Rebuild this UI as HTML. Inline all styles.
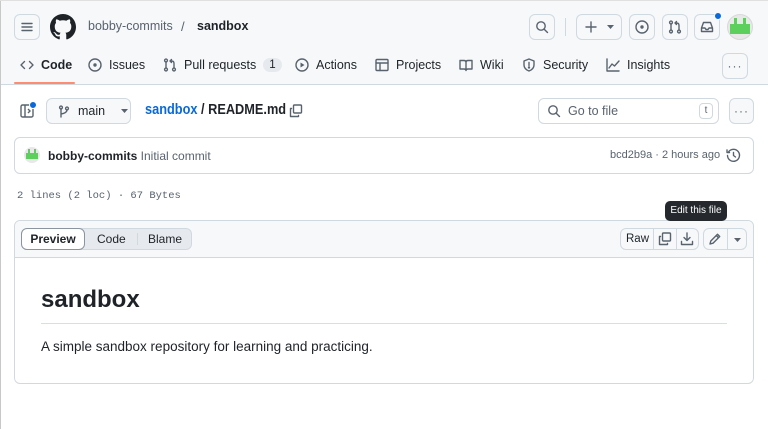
<!DOCTYPE html>
<html><head><meta charset="utf-8"><style>
*{box-sizing:border-box;margin:0;padding:0}
body{width:768px;height:429px;overflow:hidden;background:#fff;font-family:"Liberation Sans",sans-serif;color:#1f2328;position:relative}
.a{position:absolute}
.hdr{left:0;top:0;width:768px;height:85px;background:#f6f8fa;border-bottom:1px solid #d1d9e0}
.btn{position:absolute;border:1px solid #d1d9e0;border-radius:6px;background:#f6f8fa;display:flex;align-items:center;justify-content:center}
.hb{background:transparent}
svg{display:block}
.t{position:absolute;font-size:13px;white-space:nowrap}
.tab{position:absolute;top:58px;font-size:12.5px;color:#1f2328;display:flex;align-items:center;gap:7px;white-space:nowrap}
.ic{fill:none;stroke:#59636e;stroke-width:1.4;stroke-linecap:round;stroke-linejoin:round}
</style></head><body>
<div class="a hdr"></div>
<div class="a" style="left:0;top:0;width:1px;height:429px;background:#c8c8c8;z-index:5"></div>
<div class="a" style="left:0;top:0;width:768px;height:1px;background:#e0e0e0;z-index:5"></div>
<div class="btn hb" style="left:14px;top:14px;width:26px;height:26px"><svg width="14" height="14" class="ic"><path d="M2 3.5h10M2 7h10M2 10.5h10"/></svg></div>
<svg class="a" style="left:50px;top:14px" width="26" height="26" viewBox="0 0 16 16"><path fill="#1f2328" d="M8 0C3.58 0 0 3.58 0 8c0 3.54 2.290 6.53 5.47 7.59.4.07.55-.17.55-.38 0-.19-.01-.82-.01-1.490-2.01.37-2.530-.49-2.69-.94-.09-.23-.48-.94-.82-1.13-.28-.15-.68-.52-.01-.53.63-.01 1.08.58 1.23.82.72 1.21 1.870.87 2.33.66.07-.52.28-.87.51-1.07-1.78-.2-3.64-.89-3.64-3.95 0-.87.31-1.59.82-2.15-.08-.2-.36-1.02.08-2.12 0 0 .67-.21 2.2.82.64-.18 1.32-.27 2-.27.68 0 1.36.09 2 .27 1.53-1.04 2.2-.82 2.2-.82.44 1.1.16 1.92.08 2.12.51.56.82 1.27.82 2.15 0 3.07-1.87 3.75-3.65 3.95.29.25.54.73.54 1.48 0 1.07-.01 1.93-.01 2.2 0 .21.15.46.55.38A8.013 8.013 0 0016 8c0-4.42-3.58-8-8-8z"/></svg>
<div class="t" style="left:88px;top:19px;color:#59636e;font-size:12.5px">bobby-commits</div>
<div class="t" style="left:181px;top:19px;color:#59636e">/</div>
<div class="t" style="left:197px;top:19px;font-weight:bold;font-size:12.5px">sandbox</div>

<div class="btn hb" style="left:529px;top:14px;width:26px;height:26px"><svg width="14" height="14" class="ic"><circle cx="6" cy="6" r="4.2"/><path d="M9.2 9.2l3.3 3.3"/></svg></div>
<div class="a" style="left:565px;top:18px;width:1px;height:18px;background:#d1d9e0"></div>
<div class="btn hb" style="left:576px;top:14px;width:46px;height:26px;gap:10px"><svg width="12" height="12" class="ic"><path d="M6 1v10M1 6h10"/></svg><svg width="7" height="4"><path d="M0 0h7L3.5 4z" fill="#59636e"/></svg></div>
<div class="btn hb" style="left:629px;top:14px;width:26px;height:26px"><svg width="14" height="14" class="ic"><circle cx="7" cy="7" r="6"/><circle cx="7" cy="7" r="1" fill="#59636e"/></svg></div>
<div class="btn hb" style="left:662px;top:14px;width:26px;height:26px"><svg width="14" height="14" class="ic"><circle cx="3" cy="2.5" r="1.4"/><circle cx="3" cy="11.5" r="1.4"/><circle cx="11" cy="11.5" r="1.4"/><path d="M3 4v6M11 10V5.5Q11 3 8.5 3H7M8.5 1.5L7 3l1.5 1.5"/></svg></div>
<div class="btn hb" style="left:694px;top:14px;width:26px;height:26px"><svg width="14" height="14" class="ic"><path d="M1.5 8l2-5.5h7l2 5.5v3.5h-11zM1.5 8h3.5l1 1.5h2l1-1.5h3.5"/></svg></div>
<div class="a" style="left:714px;top:12px;width:8px;height:8px;border-radius:50%;background:#0969da;border:1px solid #f6f8fa"></div>
<div class="a" style="left:727px;top:14px;width:26px;height:26px;border-radius:50%;background:#e8e8e8;overflow:hidden;border:1px solid #d8d8d8"><div class="a" style="left:2px;top:9px;width:20px;height:10px;background:#5ccf5c"></div><div class="a" style="left:6px;top:3px;width:3px;height:7px;background:#5ccf5c"></div><div class="a" style="left:15px;top:3px;width:3px;height:7px;background:#5ccf5c"></div></div>

<div class="tab" style="left:20px;font-weight:bold"><svg width="14" height="14" class="ic"><path d="M4.5 3.5L1 7l3.5 3.5M9.5 3.5L13 7l-3.5 3.5"/></svg>Code</div>
<div class="a" style="left:14px;top:82px;width:61px;height:2px;background:#fd8c73;border-radius:1px"></div>
<div class="tab" style="left:88px"><svg width="14" height="14" class="ic"><circle cx="7" cy="7" r="6"/><circle cx="7" cy="7" r="1" fill="#59636e"/></svg>Issues</div>
<div class="tab" style="left:163px"><svg width="14" height="14" class="ic"><circle cx="3" cy="2.5" r="1.4"/><circle cx="3" cy="11.5" r="1.4"/><circle cx="11" cy="11.5" r="1.4"/><path d="M3 4v6M11 10V5.5Q11 3 8.5 3H7M8.5 1.5L7 3l1.5 1.5"/></svg>Pull requests<span style="background:#e6eaef;border-radius:9px;padding:1px 6px;font-size:11.5px">1</span></div>
<div class="tab" style="left:295px"><svg width="14" height="14" class="ic"><circle cx="7" cy="7" r="6"/><path d="M5.5 4.5v5l4-2.5z" fill="#59636e" stroke="none"/></svg>Actions</div>
<div class="tab" style="left:375px"><svg width="14" height="14" class="ic"><rect x="1" y="1.5" width="12" height="11" rx="1"/><path d="M1 5h12M5 5v7.5"/></svg>Projects</div>
<div class="tab" style="left:459px"><svg width="14" height="14" class="ic"><path d="M1 2.5h4Q7 2.5 7 4.5v8Q7 11 5 11H1zM13 2.5H9Q7 2.5 7 4.5v8Q7 11 9 11h4z"/></svg>Wiki</div>
<div class="tab" style="left:522px"><svg width="14" height="14" class="ic"><path d="M7 1l5 2v4q0 4-5 6-5-2-5-6V3z"/><path d="M7 4.5v3"/><circle cx="7" cy="9.5" r=".5" fill="#59636e"/></svg>Security</div>
<div class="tab" style="left:606px"><svg width="14" height="14" class="ic"><path d="M1 1v12h12M3 10l3-4 2.5 2L13 3"/></svg>Insights</div>
<div class="btn hb" style="left:722px;top:53px;width:26px;height:26px;font-size:12px;color:#59636e;letter-spacing:1px">···</div>

<svg class="a" style="left:20px;top:103px" width="16" height="16"><rect x="1" y="2" width="12" height="12" rx="1.5" fill="none" stroke="#59636e" stroke-width="1.4"/><path d="M5 2v12M8 6l2 2-2 2" fill="none" stroke="#59636e" stroke-width="1.4"/></svg>
<div class="a" style="left:29px;top:101px;width:8px;height:8px;border-radius:50%;background:#0969da;border:1px solid #fff"></div>
<div class="btn" style="left:46px;top:98px;width:85px;height:26px;justify-content:flex-start;padding-left:11px;gap:8px;font-size:12.5px"><svg width="12" height="13" class="ic"><circle cx="3" cy="2.5" r="1.4"/><circle cx="9" cy="3.5" r="1.4"/><path d="M3 4v8M9 5q0 3-6 4"/></svg>main<svg width="7" height="4" style="margin-left:8px"><path d="M0 0h7L3.5 4z" fill="#59636e"/></svg></div>
<div class="t" style="left:145px;top:102px;font-size:14.5px;font-weight:bold;transform:scaleX(0.88);transform-origin:left"><span style="color:#0969da">sandbox</span> / README.md</div>
<svg class="a" style="left:289px;top:104px" width="14" height="14"><g class="ic"><rect x="4.5" y="1" width="8" height="8" rx="1"/><path d="M2.5 4.5H1.5v8h8v-1"/></g></svg>
<div class="a" style="left:538px;top:98px;width:181px;height:26px;border:1px solid #d1d9e0;border-radius:6px;background:#fff"></div>
<svg class="a" style="left:547px;top:104px" width="14" height="14"><g class="ic"><circle cx="6" cy="6" r="4.2"/><path d="M9.2 9.2l3.3 3.3"/></g></svg>
<div class="t" style="left:568px;top:104px;color:#59636e;font-size:12.5px">Go to file</div>
<div class="a" style="left:699px;top:103px;width:14px;height:16px;border:1px solid #d1d9e0;border-radius:4px;font-size:10px;text-align:center;line-height:14px;color:#59636e">t</div>
<div class="btn" style="left:729px;top:98px;width:25px;height:26px;font-size:12px;color:#59636e;letter-spacing:1px">···</div>

<div class="a" style="left:14px;top:137px;width:740px;height:37px;border:1px solid #d1d9e0;border-radius:6px"></div>
<div class="a" style="left:24px;top:147px;width:16px;height:16px;border-radius:50%;background:#e8e8e8;overflow:hidden"><div class="a" style="left:2px;top:6px;width:12px;height:6px;background:#5ccf5c"></div><div class="a" style="left:4px;top:2px;width:2px;height:5px;background:#5ccf5c"></div><div class="a" style="left:10px;top:2px;width:2px;height:5px;background:#5ccf5c"></div></div>
<div class="t" style="left:48px;top:149px;font-weight:bold;font-size:12px">bobby-commits <span style="font-weight:normal;color:#59636e">Initial commit</span></div>
<div class="t" style="left:610px;top:149px;font-size:11px;color:#59636e">bcd2b9a · 2 hours ago</div>
<svg class="a" style="left:726px;top:148px" width="15" height="15"><g class="ic"><path d="M2.5 4A6 6 0 1 1 1.5 7.5M1 2v2.5h2.5M7.5 4.5v3l2 1.5"/></g></svg>

<div class="t" style="left:17px;top:190px;font-family:'Liberation Mono',monospace;font-size:10.5px;color:#59636e">2 lines (2 loc) · 67 Bytes</div>

<div class="a" style="left:14px;top:220px;width:740px;height:164px;border:1px solid #d1d9e0;border-radius:6px;overflow:hidden"><div style="height:37px;background:#f6f8fa;border-bottom:1px solid #d1d9e0"></div></div>
<div class="a" style="left:665px;top:201px;width:62px;height:20px;background:#25292e;border-radius:5px;color:#fff;font-size:10px;text-align:center;line-height:20px">Edit this file</div>
<div class="a" style="left:21px;top:228px;width:171px;height:22px;background:#e6eaef;border:1px solid #d1d9e0;border-radius:6px"></div>
<div class="a" style="left:21px;top:228px;width:64px;height:22px;background:#fff;border:1px solid #8c959f;border-radius:6px;font-size:12px;font-weight:bold;text-align:center;line-height:20px">Preview</div>
<div class="t" style="left:97px;top:232px;font-size:12px">Code</div>
<div class="a" style="left:137px;top:233px;width:1px;height:12px;background:#d1d9e0"></div>
<div class="t" style="left:148px;top:232px;font-size:12px">Blame</div>
<div class="btn" style="left:620px;top:228px;width:79px;height:22px"></div>
<div class="t" style="left:626px;top:233px;font-size:11.5px">Raw</div>
<div class="a" style="left:653px;top:228px;width:1px;height:22px;background:#d1d9e0"></div>
<div class="a" style="left:676px;top:228px;width:1px;height:22px;background:#d1d9e0"></div>
<svg class="a" style="left:658px;top:232px" width="14" height="14"><g class="ic"><rect x="4.5" y="1" width="8" height="8" rx="1"/><path d="M2.5 4.5H1.5v8h8v-1"/></g></svg>
<svg class="a" style="left:680px;top:232px" width="14" height="14"><g class="ic"><path d="M7 1v7M4 5.5L7 8.5l3-3M1.5 9.5v3h11v-3"/></g></svg>
<div class="btn" style="left:703px;top:228px;width:44px;height:22px"></div>
<div class="a" style="left:727px;top:228px;width:1px;height:22px;background:#d1d9e0"></div>
<svg class="a" style="left:708px;top:232px" width="14" height="14"><g class="ic"><path d="M2 12l.8-3L9.5 2.3l2.2 2.2L5 11.2zM8.3 3.5l2.2 2.2"/></g></svg>
<svg class="a" style="left:734px;top:238px" width="7" height="4"><path d="M0 0h7L3.5 4z" fill="#59636e"/></svg>

<div class="t" style="left:41px;top:286px;font-size:24px;font-weight:bold">sandbox</div>
<div class="a" style="left:41px;top:323px;width:686px;height:1px;background:#d8dee4"></div>
<div class="t" style="left:41px;top:339px;font-size:13.5px">A simple sandbox repository for learning and practicing.</div>
</body></html>
